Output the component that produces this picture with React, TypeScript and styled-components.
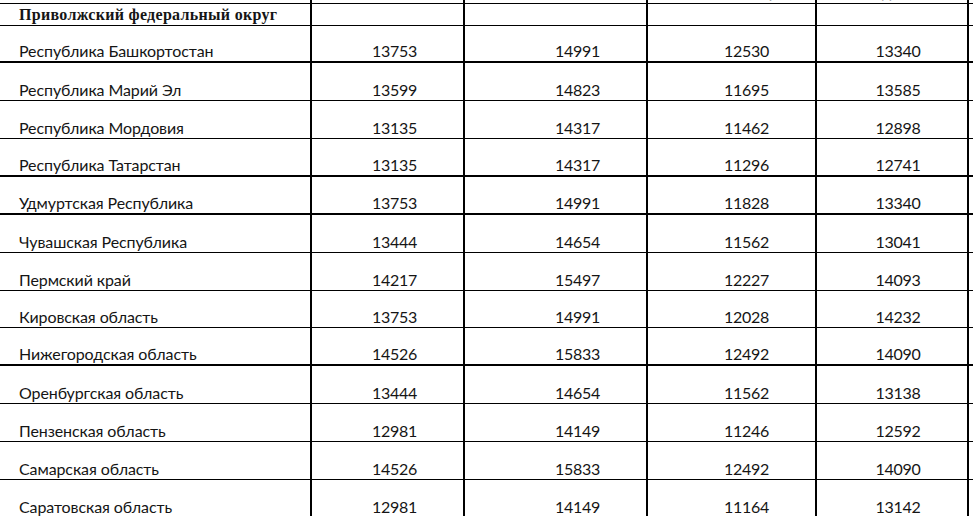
import React from 'react';
import styled, { createGlobalStyle } from 'styled-components';

const GlobalStyle = createGlobalStyle`
  html, body {
    margin: 0;
    padding: 0;
    background: #fff;
    overflow: hidden;
  }
`;

const COLS = '312px 153px 183px 169px 152px';

const Sheet = styled.div`
  width: 973px;
  height: 516px;
  overflow: hidden;
  background: #fff;
`;

const Row = styled.div<{ $h: number; $thick?: boolean }>`
  display: grid;
  grid-template-columns: ${COLS};
  height: ${(p) => p.$h}px;
  box-sizing: border-box;
  border-bottom: ${(p) => (p.$thick ? 2 : 1)}px solid #000;
`;

const HeadRow = styled(Row)`
  margin-top: -36px;
`;

const Cell = styled.div<{ $shift?: number }>`
  box-sizing: border-box;
  border-right: 2px solid #000;
  display: flex;
  align-items: flex-end;
  justify-content: center;
  padding: 0 0 2px ${(p) => p.$shift ?? 0}px;
  font-family: Lato, 'Liberation Sans', sans-serif;
  font-size: 16px;
  letter-spacing: -0.3px;
  color: #151515;
  line-height: 16px;
`;

const NameCell = styled(Cell)`
  justify-content: flex-start;
  padding-left: 19px;
  font-size: 16px;
  letter-spacing: -0.1px;
`;

const HeadCell = styled(Cell)`
  color: #a8a8a8;
  font-size: 15px;
  padding-bottom: 3px;
  line-height: 15px;
`;

const DistrictCell = styled(NameCell)`
  font-family: 'Liberation Serif', serif;
  font-weight: bold;
  font-size: 16px;
  letter-spacing: 0.3px;
  padding-bottom: 2px;
`;

const shifts = [14, 44, 30, 12];

type Region = { name: string; v: number[]; thick?: boolean; h?: number };

const regions: Region[] = [
  { name: 'Республика Башкортостан', v: [13753, 14991, 12530, 13340], thick: true, h: 37 },
  { name: 'Республика Марий Эл', v: [13599, 14823, 11695, 13585] },
  { name: 'Республика Мордовия', v: [13135, 14317, 11462, 12898] },
  { name: 'Республика Татарстан', v: [13135, 14317, 11296, 12741], thick: true },
  { name: 'Удмуртская Республика', v: [13753, 14991, 11828, 13340], thick: true },
  { name: 'Чувашская Республика', v: [13444, 14654, 11562, 13041] },
  { name: 'Пермский край', v: [14217, 15497, 12227, 14093] },
  { name: 'Кировская область', v: [13753, 14991, 12028, 14232], h: 37 },
  { name: 'Нижегородская область', v: [14526, 15833, 12492, 14090], thick: true },
  { name: 'Оренбургская область', v: [13444, 14654, 11562, 13138] },
  { name: 'Пензенская область', v: [12981, 14149, 11246, 12592] },
  { name: 'Самарская область', v: [14526, 15833, 12492, 14090] },
  { name: 'Саратовская область', v: [12981, 14149, 11164, 13142] },
];

const headers = ['населения', 'население', 'пенсионеры', 'дети'];

export default function App() {
  return (
    <Sheet>
      <GlobalStyle />
      <HeadRow $h={40}>
        <HeadCell />
        {headers.map((h, i) => (
          <HeadCell key={h} $shift={shifts[i]}>{h}</HeadCell>
        ))}
      </HeadRow>
      <Row $h={22}>
        <DistrictCell>Приволжский федеральный округ</DistrictCell>
        <Cell />
        <Cell />
        <Cell />
        <Cell />
      </Row>
      {regions.map((r) => (
        <Row key={r.name} $h={r.h ?? 38} $thick={r.thick}>
          <NameCell>{r.name}</NameCell>
          {r.v.map((n, i) => (
            <Cell key={i} $shift={shifts[i]}>{n}</Cell>
          ))}
        </Row>
      ))}
    </Sheet>
  );
}
